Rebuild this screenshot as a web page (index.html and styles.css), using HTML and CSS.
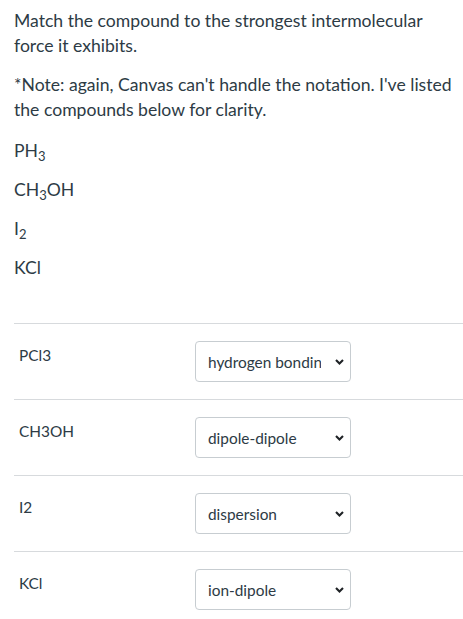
FILE: index.html
```html
<!DOCTYPE html>
<html lang="en">
<head>
<meta charset="utf-8">
<title>Matching question</title>
<link rel="stylesheet" href="styles.css">
</head>
<body>
<div class="question">
  <div class="intro">
    <p>Match the compound to the strongest intermolecular force it exhibits.</p>
    <p>*Note: again, Canvas can't handle the notation. I've listed the compounds below for clarity.</p>
  </div>
  <div class="compounds">
    <p>PH<sub>3</sub></p>
    <p>CH<sub>3</sub>OH</p>
    <p>I<sub>2</sub></p>
    <p>KCl</p>
  </div>
  <div class="matches">
    <div class="match-row">
      <div class="match-label">PCl3</div>
      <div class="select-wrap">
        <select class="match-select"><option>hydrogen bonding</option></select>
        <svg class="chevron" width="9" height="6" viewBox="0 0 9 6"><path d="M1 1 L4.5 4.5 L8 1" fill="none" stroke="#1f2326" stroke-width="2.1"/></svg>
      </div>
    </div>
    <div class="match-row">
      <div class="match-label">CH3OH</div>
      <div class="select-wrap">
        <select class="match-select"><option>dipole-dipole</option></select>
        <svg class="chevron" width="9" height="6" viewBox="0 0 9 6"><path d="M1 1 L4.5 4.5 L8 1" fill="none" stroke="#1f2326" stroke-width="2.1"/></svg>
      </div>
    </div>
    <div class="match-row">
      <div class="match-label">I2</div>
      <div class="select-wrap">
        <select class="match-select"><option>dispersion</option></select>
        <svg class="chevron" width="9" height="6" viewBox="0 0 9 6"><path d="M1 1 L4.5 4.5 L8 1" fill="none" stroke="#1f2326" stroke-width="2.1"/></svg>
      </div>
    </div>
    <div class="match-row">
      <div class="match-label">KCl</div>
      <div class="select-wrap">
        <select class="match-select"><option>ion-dipole</option></select>
        <svg class="chevron" width="9" height="6" viewBox="0 0 9 6"><path d="M1 1 L4.5 4.5 L8 1" fill="none" stroke="#1f2326" stroke-width="2.1"/></svg>
      </div>
    </div>
  </div>
</div>
</body>
</html>
```
FILE: styles.css
```css
html, body {
  margin: 0;
  padding: 0;
  background: #ffffff;
}

body {
  font-family: Lato, "Noto Sans", sans-serif;
  color: #2d3b45;
  font-size: 17.6px;
  line-height: 25px;
}

.question {
  padding: 8px 0 0 14px;
}

.intro p {
  margin: 0 0 14px 0;
}

.compounds {
  margin-top: 16px;
}

.compounds p {
  margin: 0 0 14px 0;
}

.compounds p:last-child {
  margin-bottom: 0;
}

sub {
  font-size: 13px;
  line-height: 0;
  vertical-align: -4px;
}

.matches {
  margin-top: 43px;
}

.match-row {
  display: flex;
  align-items: flex-start;
  border-top: 1px solid #d7dadd;
  padding: 17px 0 17px 5px;
}

.match-label {
  width: 176px;
  flex: none;
  font-size: 15.4px;
  line-height: 20px;
  padding-top: 4px;
}

.select-wrap {
  position: relative;
  width: 156px;
  height: 41px;
}

.match-select {
  appearance: none;
  -webkit-appearance: none;
  box-sizing: border-box;
  width: 156px;
  height: 41px;
  margin: 0;
  padding: 0 29px 0 12px;
  border: 1px solid #c7cdd1;
  border-radius: 4px;
  background: #ffffff;
  font-family: Lato, "Noto Sans", sans-serif;
  font-size: 15.4px;
  color: #2d3b45;
}

.chevron {
  position: absolute;
  right: 7px;
  top: 18px;
  pointer-events: none;
}
```
